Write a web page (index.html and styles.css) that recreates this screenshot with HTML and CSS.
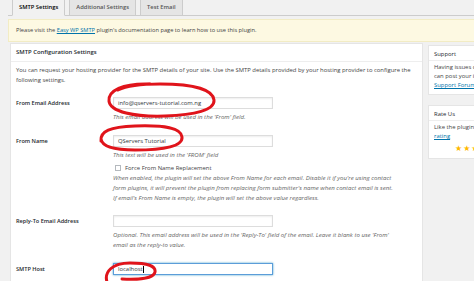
FILE: index.html
```html
<!DOCTYPE html>
<html>
<head>
<meta charset="utf-8">
<link rel="stylesheet" href="styles.css">
</head>
<body>
<div class="page">
  <div class="tabs">
    <a class="tab active">SMTP Settings</a>
    <a class="tab">Additional Settings</a>
    <a class="tab">Test Email</a>
  </div>
  <div class="notice">Please visit the <a class="link">Easy WP SMTP</a> plugin's documentation page to learn how to use this plugin.</div>
  <div class="cols">
    <div class="panel">
      <div class="panel-title">SMTP Configuration Settings</div>
      <div class="panel-body">
        <p class="intro">You can request your hosting provider for the SMTP details of your site. Use the SMTP details provided by your hosting provider to configure the following settings.</p>
        <div class="row first">
          <div class="label">From Email Address</div>
          <div class="field">
            <div class="input">info@qservers-tutorial.com.ng</div>
            <p class="help">This email address will be used in the 'From' field.</p>
          </div>
        </div>
        <div class="row">
          <div class="label">From Name</div>
          <div class="field">
            <div class="input">QServers Tutorial</div>
            <p class="help">This text will be used in the 'FROM' field</p>
            <div class="check"><span class="box"></span>Force From Name Replacement</div>
            <p class="help long">When enabled, the plugin will set the above From Name for each email. Disable it if you're using contact form plugins, it will prevent the plugin from replacing form submitter's name when contact email is sent. If email's From Name is empty, the plugin will set the above value regardless.</p>
          </div>
        </div>
        <div class="row tight">
          <div class="label">Reply-To Email Address</div>
          <div class="field">
            <div class="input"></div>
            <p class="help">Optional. This email address will be used in the 'Reply-To' field of the email. Leave it blank to use 'From' email as the reply-to value.</p>
          </div>
        </div>
        <div class="row">
          <div class="label">SMTP Host</div>
          <div class="field">
            <div class="input focus">localhost<span class="caret"></span></div>
          </div>
        </div>
      </div>
    </div>
    <aside class="sidebar">
      <div class="box">
        <div class="box-title">Support</div>
        <div class="box-body">Having issues or difficulties? You<br>can post your issue on the<br><a class="link">Support Forum</a>.</div>
      </div>
      <div class="box second">
        <div class="box-title">Rate Us</div>
        <div class="box-body">Like the plugin? Please give us a<br><a class="link">rating</a>
          <div class="stars">★★★★★</div>
        </div>
      </div>
    </aside>
  </div>
  <svg class="marks" width="474" height="281" viewBox="0 0 474 281">
    <path d="M150 84 C122 83 108 91 109 101 C110 112 135 117 165 116 C195 115 215 110 214 100 C213 90 195 84 160 84 C140 84 126 86 118 90"/>
    <path d="M101 141 C100 131 110 127 135 126 C165 125 181 128 182 137 C183 146 165 150 135 150 C112 150 102 146 101 139"/>
    <path d="M107 282 C104 272 112 263 130 263 C148 263 156 266 155 272 C154 278 140 280 122 279"/>
  </svg>
</div>
</body>
</html>
```
FILE: styles.css
```css
* { box-sizing: border-box; }
html, body { margin: 0; padding: 0; }
body {
  background: #f1f1f1;
  font-family: "Open Sans", "Noto Sans", sans-serif;
  font-size: 5.9px;
  color: #444;
  overflow: hidden;
  width: 474px;
  height: 281px;
}
.page { position: relative; padding-left: 8px; height: 281px; overflow: hidden; }
.tabs {
  display: flex;
  gap: 4px;
  padding-left: 4px;
  height: 16px;
  border-bottom: 1px solid #ccc;
}
.tab {
  display: block;
  height: 16px;
  padding: 0 6px;
  line-height: 15px;
  font-weight: 600;
  font-size: 5.8px;
  color: #555;
  background: #e5e5e5;
  border: 1px solid #ccc;
  border-top: 0;
}
.tab.active {
  background: #f1f1f1;
  color: #000;
  border-bottom-color: #f1f1f1;
}
.notice {
  margin-top: 3px;
  height: 23px;
  line-height: 21px;
  padding-left: 7px;
  font-size: 5.7px;
  background: #fdf9e2;
  border: 1px solid #f2ecc4;
  border-right: 0;
  white-space: nowrap;
}
.link { color: #0073aa; text-decoration: underline; }
.cols { display: flex; gap: 5px; margin-top: 1px; margin-left: 2px; }
.panel {
  width: 413px;
  flex: none;
  background: #fff;
  border: 1px solid #e5e5e5;
  height: 260px;
}
.panel-title {
  height: 18px;
  line-height: 17px;
  padding-left: 5px;
  font-weight: 600;
  font-size: 5.9px;
  color: #23282d;
  border-bottom: 1px solid #eee;
}
.panel-body { padding: 3px 6px 0 5px; line-height: 10px; }
.intro { margin: 0; width: 400px; }
.row { display: grid; grid-template-columns: 97px 282px; margin-top: 13px; }
.row.first, .row.tight { margin-top: 12px; }
.label {
  font-weight: 600;
  font-size: 5.6px;
  color: #23282d;
  line-height: 12px;
}
.field { width: 282px; }
.input {
  width: 160px;
  height: 12px;
  border: 1px solid #ddd;
  box-shadow: inset 0 1px 2px rgba(0,0,0,.07);
  background: #fff;
  color: #32373c;
  padding-left: 4px;
  line-height: 10px;
}
.input.focus {
  border-color: #5b9dd9;
  box-shadow: 0 0 2px rgba(30,140,190,.8);
}
.caret {
  display: inline-block;
  width: 1px;
  height: 7px;
  background: #000;
  vertical-align: middle;
}
.help {
  margin: 3px 0 0;
  font-style: italic;
  font-size: 6.1px;
  color: #666;
  line-height: 10px;
}
.help.long { margin-top: 0; }
.check {
  margin-top: 3px;
  line-height: 10px;
  display: flex;
  align-items: center;
  padding-left: 2px;
}
.check .box {
  display: inline-block;
  width: 6px;
  height: 6px;
  border: 1px solid #b4b9be;
  background: #fff;
  margin-right: 4px;
}
.sidebar { width: 220px; flex: none; margin-top: 2px; }
.sidebar .box {
  display: block;
  background: #fff;
  border: 1px solid #e5e5e5;
}
.sidebar .box.second { margin-top: 10px; }
.box-title {
  padding: 3px 5px 1px;
  line-height: 10px;
  color: #23282d;
  border-bottom: 1px solid #eee;
}
.box-body {
  padding: 2px 5px 4px;
  line-height: 9px;
  white-space: nowrap;
}
.stars {
  margin-top: 3px;
  padding-left: 21px;
  color: #ffb900;
  font-family: "DejaVu Sans", sans-serif;
  font-size: 8px;
  line-height: 10px;
  letter-spacing: 1px;
}
.marks {
  position: absolute;
  left: 0;
  top: 0;
  pointer-events: none;
}
.marks path {
  fill: none;
  stroke: #e0141b;
  stroke-width: 3;
  stroke-linecap: round;
  stroke-linejoin: round;
}
```
